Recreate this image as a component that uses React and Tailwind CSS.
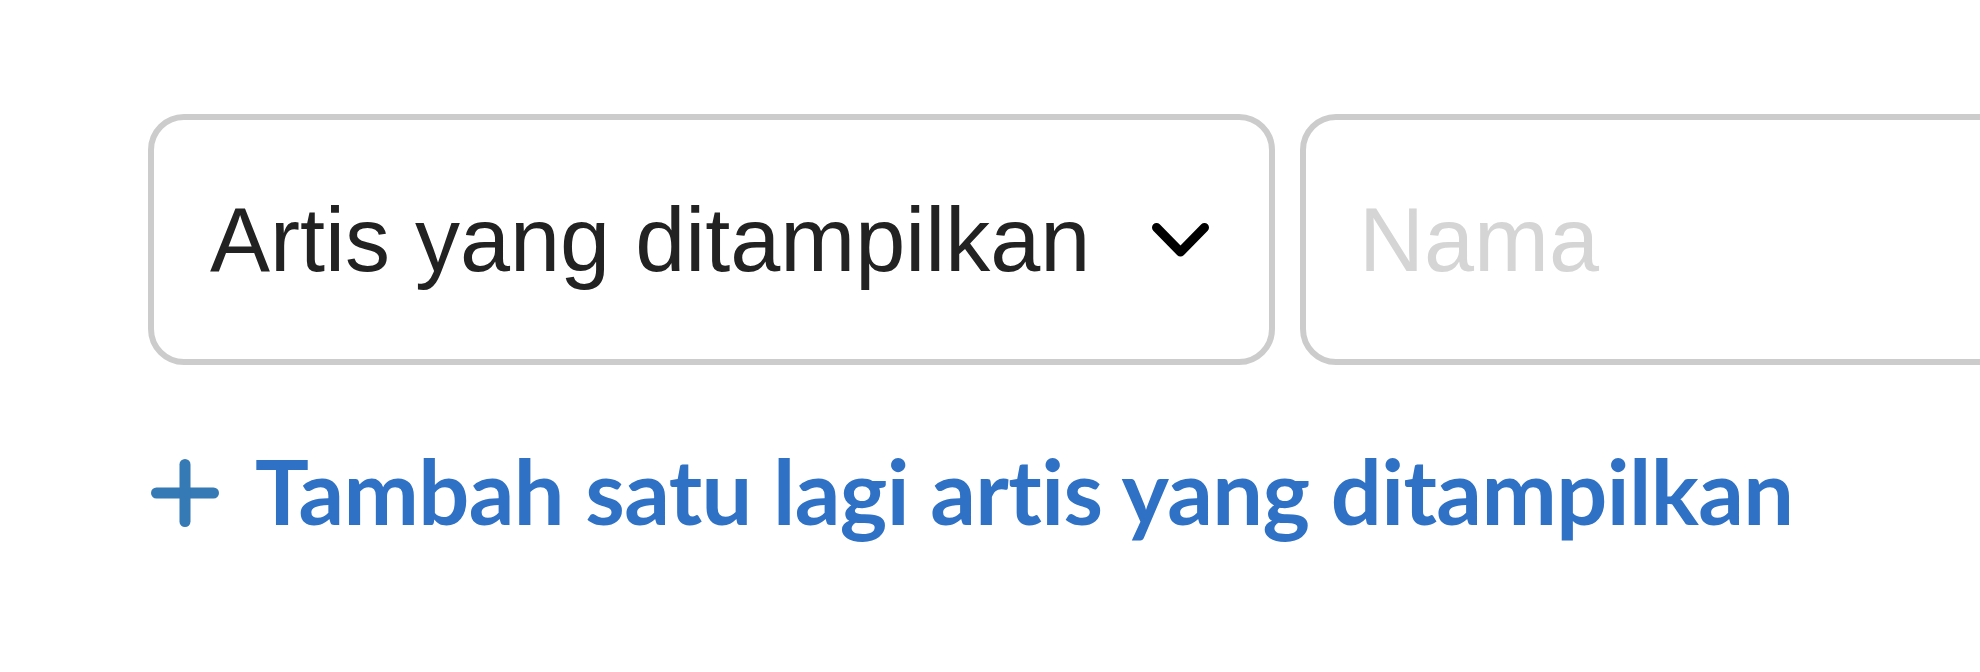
import React from "react";

export default function App() {
  return (
    <div className="w-[1980px] h-[672px] overflow-hidden bg-white">
      <div className="pl-[148px] pt-[114px]">
        <div className="flex gap-[25px]">
          <div className="w-[1127px] h-[251px] shrink-0 border-[6px] border-[#cccccc] rounded-[36px] flex items-center justify-between pl-[56px] pr-[60px] bg-white">
            <span className="text-[90px] leading-none text-[#222222] whitespace-nowrap font-['Liberation_Sans',Arial,sans-serif]">
              Artis yang ditampilkan
            </span>
            <svg width="57" height="34" viewBox="0 0 57 34" className="shrink-0">
              <polyline
                points="4.5,4.5 28.5,29 52.5,4.5"
                fill="none"
                stroke="#000"
                strokeWidth="9"
                strokeLinecap="round"
                strokeLinejoin="round"
              />
            </svg>
          </div>
          <div className="w-[1127px] h-[251px] shrink-0 border-[6px] border-[#cccccc] rounded-[36px] flex items-center pl-[53px] bg-white">
            <span className="text-[90px] leading-none text-[#d5d5d5] whitespace-nowrap font-['Liberation_Sans',Arial,sans-serif]">
              Nama
            </span>
          </div>
        </div>
        <button className="mt-[80px] flex items-center gap-[36px] pl-[3px] bg-transparent">
          <svg width="68" height="68" viewBox="0 0 68 68" className="shrink-0 mt-[6px]">
            <line x1="5.5" y1="34" x2="62.5" y2="34" stroke="#3579b5" strokeWidth="11" strokeLinecap="round" />
            <line x1="34" y1="5.5" x2="34" y2="62.5" stroke="#3579b5" strokeWidth="11" strokeLinecap="round" />
          </svg>
          <span className="text-[90px] leading-none font-bold text-[#2f71c4] whitespace-nowrap tracking-[-0.6px] [font-variant-ligatures:none] font-['Lato',sans-serif]">
            Tambah satu lagi artis yang ditampilkan
          </span>
        </button>
      </div>
    </div>
  );
}
